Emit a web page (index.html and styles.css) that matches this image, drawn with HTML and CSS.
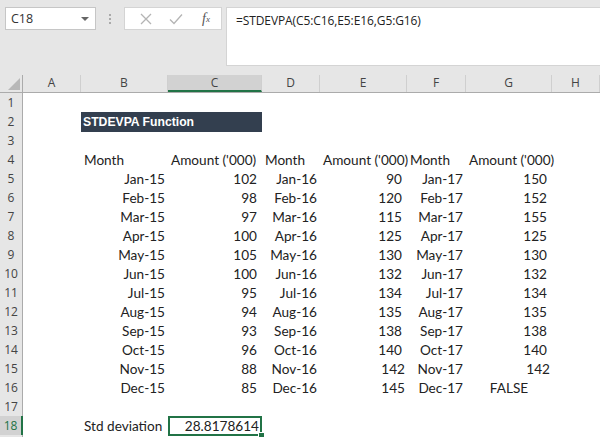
FILE: index.html
```html
<!DOCTYPE html>
<html>
<head>
<meta charset="utf-8">
<link rel="stylesheet" href="styles.css">
</head>
<body>
<div class="app">
  <div class="fbar">
    <div class="namebox"><span class="nb-text">C18</span><span class="nb-arrow"></span></div>
    <div class="dots"><span></span><span></span><span></span></div>
    <div class="btns">
      <span class="btn x">
        <svg width="12" height="12" viewBox="0 0 12 12"><path d="M1 1L11 11M11 1L1 11" stroke="#b4b4b4" stroke-width="1.3" fill="none"/></svg>
      </span>
      <span class="btn ok">
        <svg width="14" height="12" viewBox="0 0 14 12"><path d="M1 6.5L5 10.5L13 1.5" stroke="#b4b4b4" stroke-width="1.3" fill="none"/></svg>
      </span>
      <span class="btn fx"><i>f</i><sub>x</sub></span>
    </div>
    <div class="formula">=STDEVPA(C5:C16,E5:E16,G5:G16)</div>
  </div>
  <div class="sheet">
    <div class="row colhead">
      <div class="corner"><svg width="12" height="12" viewBox="0 0 12 12"><path d="M12 0L12 12L0 12Z" fill="#b8b8b8"/></svg></div>
      <div class="ch">A</div><div class="ch">B</div><div class="ch sel">C</div><div class="ch">D</div><div class="ch">E</div><div class="ch">F</div><div class="ch">G</div><div class="ch">H</div>
    </div>
    <div class="row"><div class="rh">1</div><div></div><div></div><div></div><div></div><div></div><div></div><div></div><div></div></div>
    <div class="row"><div class="rh">2</div><div></div><div class="title">STDEVPA Function</div><div></div><div></div><div></div><div></div><div></div></div>
    <div class="row"><div class="rh">3</div><div></div><div></div><div></div><div></div><div></div><div></div><div></div><div></div></div>
    <div class="row"><div class="rh">4</div><div></div><div class="l">Month</div><div class="l">Amount ('000)</div><div class="l">Month</div><div class="l">Amount ('000)</div><div class="l">Month</div><div class="l">Amount ('000)</div><div></div></div>
    <div class="row"><div class="rh">5</div><div></div><div class="d">Jan-15</div><div class="n">102</div><div class="d">Jan-16</div><div class="n">90</div><div class="d">Jan-17</div><div class="n">150</div><div></div></div>
    <div class="row"><div class="rh">6</div><div></div><div class="d">Feb-15</div><div class="n">98</div><div class="d">Feb-16</div><div class="n">120</div><div class="d">Feb-17</div><div class="n">152</div><div></div></div>
    <div class="row"><div class="rh">7</div><div></div><div class="d">Mar-15</div><div class="n">97</div><div class="d">Mar-16</div><div class="n">115</div><div class="d">Mar-17</div><div class="n">155</div><div></div></div>
    <div class="row"><div class="rh">8</div><div></div><div class="d">Apr-15</div><div class="n">100</div><div class="d">Apr-16</div><div class="n">125</div><div class="d">Apr-17</div><div class="n">125</div><div></div></div>
    <div class="row"><div class="rh">9</div><div></div><div class="d">May-15</div><div class="n">105</div><div class="d">May-16</div><div class="n">130</div><div class="d">May-17</div><div class="n">130</div><div></div></div>
    <div class="row"><div class="rh">10</div><div></div><div class="d">Jun-15</div><div class="n">100</div><div class="d">Jun-16</div><div class="n">132</div><div class="d">Jun-17</div><div class="n">132</div><div></div></div>
    <div class="row"><div class="rh">11</div><div></div><div class="d">Jul-15</div><div class="n">95</div><div class="d">Jul-16</div><div class="n">134</div><div class="d">Jul-17</div><div class="n">134</div><div></div></div>
    <div class="row"><div class="rh">12</div><div></div><div class="d">Aug-15</div><div class="n">94</div><div class="d">Aug-16</div><div class="n">135</div><div class="d">Aug-17</div><div class="n">135</div><div></div></div>
    <div class="row"><div class="rh">13</div><div></div><div class="d">Sep-15</div><div class="n">93</div><div class="d">Sep-16</div><div class="n">138</div><div class="d">Sep-17</div><div class="n">138</div><div></div></div>
    <div class="row"><div class="rh">14</div><div></div><div class="d">Oct-15</div><div class="n">96</div><div class="d">Oct-16</div><div class="n">140</div><div class="d">Oct-17</div><div class="n">140</div><div></div></div>
    <div class="row"><div class="rh">15</div><div></div><div class="d">Nov-15</div><div class="n">88</div><div class="d">Nov-16</div><div class="n t">142</div><div class="d">Nov-17</div><div class="n t">142</div><div></div></div>
    <div class="row"><div class="rh">16</div><div></div><div class="d">Dec-15</div><div class="n">85</div><div class="d">Dec-16</div><div class="n t">145</div><div class="d">Dec-17</div><div class="c">FALSE</div><div></div></div>
    <div class="row"><div class="rh">17</div><div></div><div></div><div></div><div></div><div></div><div></div><div></div><div></div></div>
    <div class="row"><div class="rh rsel">18</div><div></div><div class="l">Std deviation</div><div class="n active">28.8178614<span class="handle"></span></div><div></div><div></div><div></div><div></div><div></div></div>
    <div class="row"><div class="rh"></div><div></div><div></div><div></div><div></div><div></div><div></div><div></div><div></div></div>
  </div>
</div>
</body>
</html>
```
FILE: styles.css
```css
html, body {
  margin: 0;
  padding: 0;
  background: #ffffff;
}
.app {
  width: 600px;
  height: 437px;
  overflow: hidden;
  font-family: Lato, "Liberation Sans", sans-serif;
}
.fbar {
  height: 75px;
  box-sizing: border-box;
  padding-top: 7px;
  background: #e6e6e6;
  display: flex;
  align-items: flex-start;
}
.namebox {
  margin-left: 5px;
  width: 91px;
  height: 23px;
  box-sizing: border-box;
  background: #fff;
  border: 1px solid #c6c6c6;
  display: flex;
  align-items: center;
  justify-content: space-between;
  padding: 0 6px 0 5px;
  font-family: "Open Sans", sans-serif;
  font-size: 12.5px;
  color: #333;
}
.nb-arrow {
  width: 0;
  height: 0;
  border-left: 4px solid transparent;
  border-right: 4px solid transparent;
  border-top: 4px solid #666;
}
.dots {
  width: 28px;
  height: 23px;
  display: flex;
  flex-direction: column;
  align-items: center;
  justify-content: center;
  gap: 2px;
}
.dots span {
  width: 2px;
  height: 2px;
  background: #aaa;
}
.btns {
  width: 98px;
  height: 23px;
  box-sizing: border-box;
  background: #fff;
  border: 1px solid #d4d4d4;
  display: flex;
  align-items: center;
}
.btn {
  width: 32px;
  display: flex;
  justify-content: center;
  align-items: center;
}
.btn.x { margin-left: 6px; }
.fx {
  font-family: "Liberation Serif", serif;
  font-size: 14px;
  color: #555;
}
.fx i { font-style: italic; }
.fx sub { font-size: 9px; font-style: italic; vertical-align: -1px; }
.formula {
  margin-left: 4px;
  flex: 1;
  height: 59px;
  box-sizing: border-box;
  background: #fff;
  border: 1px solid #d4d4d4;
  border-right: none;
  padding: 4px 0 0 9px;
  font-family: "Open Sans", sans-serif;
  font-size: 12px;
  letter-spacing: -0.1px;
  color: #222;
}
.sheet {
  background: #fff;
}
.row {
  display: grid;
  grid-template-columns: 23px 58px 87px 94px 58px 87px 59px 86px 48px;
  height: 19px;
  font-size: 13.6px;
  color: #222;
}
.row > div {
  line-height: 19px;
  padding-top: 1px;
  box-sizing: border-box;
  white-space: nowrap;
  position: relative;
}
.colhead {
  height: 18px;
  background: #e6e6e6;
  border-bottom: 1px solid #ababab;
  box-sizing: border-box;
}
.colhead > div {
  line-height: 16px;
  padding-top: 0;
}
.corner {
  display: flex;
  justify-content: flex-end;
  align-items: flex-end;
  padding: 0 2px 2px 0 !important;
  border-right: 1px solid #ababab;
}
.ch {
  text-align: center;
  font-family: "Open Sans", sans-serif;
  font-size: 12px;
  color: #444;
  border-right: 1px solid #cfcfcf;
}
.ch.sel {
  background: #d2d2d2;
  border-bottom: 2px solid #217346;
  line-height: 15px !important;
}
.rh {
  background: #e6e6e6;
  border-right: 1px solid #ababab;
  border-bottom: 1px solid #d4d4d4;
  text-align: center;
  font-family: "Open Sans", sans-serif;
  font-size: 12px;
  color: #444;
  line-height: 18px !important;
}
.rh.rsel {
  background: #d2d2d2;
  border-right: 2px solid #217346;
  color: #217346;
}
.title {
  grid-column: span 2;
  background: #333f4f;
  color: #fff;
  font-family: "Liberation Sans", Arial, sans-serif;
  font-weight: bold;
  font-size: 12.2px;
  padding-left: 2px;
}
.l { padding-left: 3px; }
.d { text-align: right; padding-right: 3px; }
.n { text-align: right; padding-right: 5px; }
.n.t { padding-right: 2px; }
.c { text-align: center; }
.active {
  outline: 2px solid #217346;
  outline-offset: -2px;
  padding-right: 3px;
}
.handle {
  position: absolute;
  right: -3px;
  bottom: -3px;
  width: 5px;
  height: 5px;
  background: #217346;
  border: 1px solid #fff;
}
```
